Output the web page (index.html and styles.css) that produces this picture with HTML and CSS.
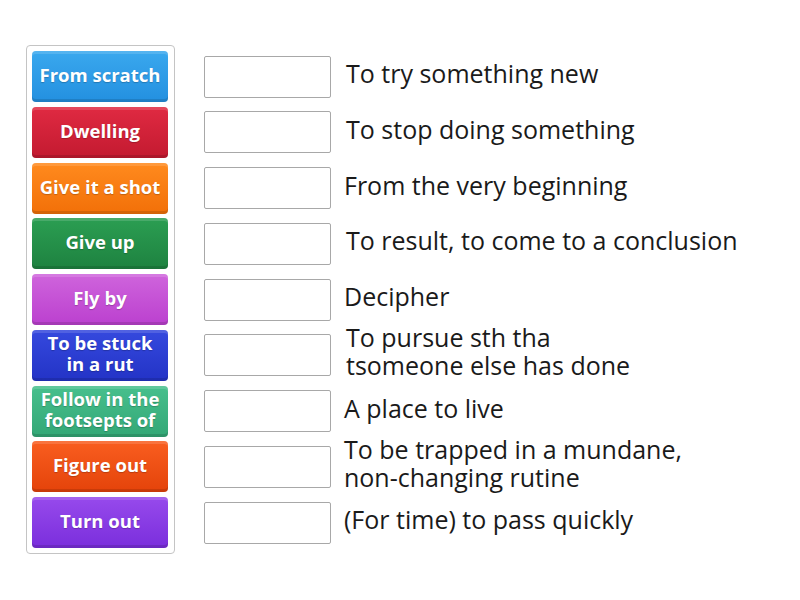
FILE: index.html
```html
<!DOCTYPE html>
<html lang="en">
<head>
<meta charset="utf-8">
<title>Match up</title>
<link rel="stylesheet" href="styles.css">
</head>
<body>
<main class="game">
  <div class="bank">
    <div class="tile c1">From scratch</div>
    <div class="tile c2">Dwelling</div>
    <div class="tile c3">Give it a shot</div>
    <div class="tile c4">Give up</div>
    <div class="tile c5">Fly by</div>
    <div class="tile c6">To be stuck in a rut</div>
    <div class="tile c7">Follow in the footsepts of</div>
    <div class="tile c8">Figure out</div>
    <div class="tile c9">Turn out</div>
  </div>
  <div class="targets">
    <div class="row"><div class="slot"></div><div class="def">To try something new</div></div>
    <div class="row"><div class="slot"></div><div class="def">To stop doing something</div></div>
    <div class="row"><div class="slot"></div><div class="def shift">From the very beginning</div></div>
    <div class="row"><div class="slot"></div><div class="def">To result, to come to a conclusion</div></div>
    <div class="row"><div class="slot"></div><div class="def shift">Decipher</div></div>
    <div class="row"><div class="slot"></div><div class="def two">To pursue sth tha<br>tsomeone else has done</div></div>
    <div class="row"><div class="slot"></div><div class="def shift">A place to live</div></div>
    <div class="row"><div class="slot"></div><div class="def two shift">To be trapped in a mundane,<br>non-changing rutine</div></div>
    <div class="row"><div class="slot"></div><div class="def shift">(For time) to pass quickly</div></div>
  </div>
</main>
</body>
</html>
```

FILE: styles.css
```css
html, body {
  margin: 0;
  padding: 0;
  background: #ffffff;
}

body {
  font-family: "Open Sans", "Liberation Sans", sans-serif;
}

.game {
  display: flex;
  align-items: flex-start;
  padding: 45px 0 0 26px;
}

.bank {
  width: 136px;
  padding: 5px 6px 5px 5px;
  border: 1px solid #c4c4c4;
  border-radius: 4px;
  display: flex;
  flex-direction: column;
  gap: 4.75px;
}

.tile {
  height: 51px;
  box-sizing: border-box;
  border-radius: 4px;
  display: flex;
  align-items: center;
  justify-content: center;
  text-align: center;
  color: #ffffff;
  font-weight: 700;
  font-size: 18.5px;
  line-height: 21px;
  padding: 0 6px 4px;
  text-shadow: 0 1px 1px rgba(0, 0, 0, 0.22);
  box-shadow: inset 0 3px 0 rgba(255, 255, 255, 0.14), inset 0 -3px 0 rgba(0, 0, 0, 0.12);
}

.c1 { background: linear-gradient(#3aa8ee, #2390e0); }
.c2 { background: linear-gradient(#e02a42, #c31a30); }
.c3 { background: linear-gradient(#ff8a1e, #f27008); }
.c4 { background: linear-gradient(#2b9e52, #1e8240); }
.c5 { background: linear-gradient(#cf64dc, #bb40cf); }
.c6 { background: linear-gradient(#3549de, #2333c6); }
.c7 { background: linear-gradient(#47c08d, #33a776); }
.c8 { background: linear-gradient(#f95e20, #e4430a); }
.c9 { background: linear-gradient(#974aec, #7a2edc); }

.targets {
  margin-left: 29px;
  padding-top: 6px;
  display: flex;
  flex-direction: column;
  gap: 4.75px;
}

.row {
  height: 51px;
  display: flex;
  align-items: center;
}

.slot {
  width: 127px;
  height: 42px;
  box-sizing: border-box;
  border: 1px solid #a8a8a8;
  border-radius: 2px;
  background: #ffffff;
  flex: none;
}

.def {
  margin-left: 15px;
  padding-bottom: 7px;
  font-size: 25px;
  line-height: 28px;
  color: #1a1a1a;
  white-space: nowrap;
}

.def.shift {
  margin-left: 13px;
}

.def.two {
  padding-bottom: 8px;
}
```
